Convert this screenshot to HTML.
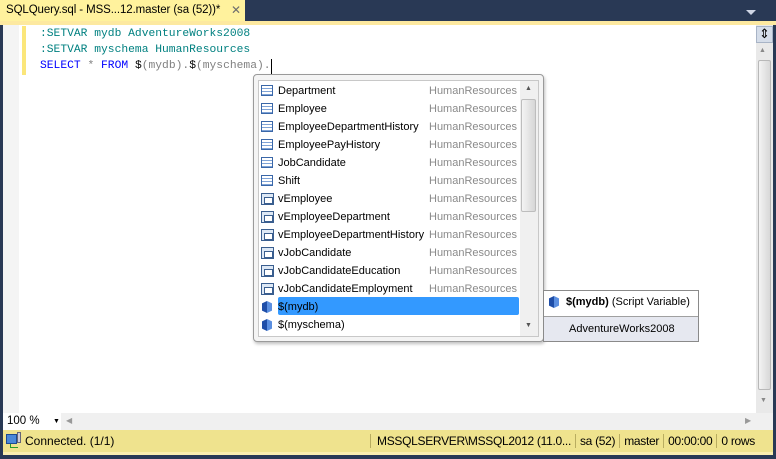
<!DOCTYPE html>
<html><head><style>
*{margin:0;padding:0;box-sizing:border-box}
body{width:776px;height:459px;background:#293955;position:relative;overflow:hidden;font-family:"Liberation Sans",sans-serif;font-size:11px}
.a{position:absolute}
.code{font-family:"Liberation Mono",monospace;font-size:11.3px;line-height:16px;white-space:pre}
.row{position:absolute;left:0;height:18px;width:270px;line-height:18px;color:#000}
.row .n{position:absolute;left:25px}
.row .s{position:absolute;left:176px;color:#8a8a8a}
.ic{position:absolute;left:8px;top:3px;width:12px;height:11px;border:1px solid #3a67a8;background:repeating-linear-gradient(#fff 0 2px,#7fa3d6 2px 3px);}
.iv{position:absolute;left:8px;top:3px;width:13px;height:12px;border:1px solid #3a5e8f;background:#dde8f5}
.iv:after{content:"";position:absolute;left:2px;top:3px;width:7px;height:5px;border:1px solid #3a5e8f;background:#fff}
.ib{position:absolute;left:9px;top:3px;width:10px;height:12px;background:linear-gradient(90deg,#1f4ea8 50%,#5b8fe0 50%);clip-path:polygon(50% 0,100% 20%,100% 80%,50% 100%,0 80%,0 20%)}
</style></head><body>
<div class="a" style="left:0;top:0;width:245px;height:22px;background:#fff29d;"></div>
<div class="a" style="left:6px;top:4px;font-size:11.5px;color:#000;letter-spacing:-0.1px">SQLQuery.sql - MSS...12.master (sa (52))*</div>
<div class="a" style="left:231px;top:3px;font-size:12px;color:#6e6e6e">✕</div>
<div class="a" style="left:746px;top:10px;width:0;height:0;border:5px solid transparent;border-top:5px solid #cfd6e5"></div>
<div class="a" style="left:0;top:21px;width:776px;height:4px;background:#fde9a0"></div>
<div class="a" style="left:3px;top:25px;width:753px;height:388px;background:#fff"></div>
<div class="a" style="left:3px;top:25px;width:16px;height:388px;background:#f4f4f4"></div>
<div class="a" style="left:22px;top:26px;width:4px;height:49px;background:#fbe67a"></div>
<div class="a code" style="left:40px;top:26px;color:#008080">:SETVAR mydb AdventureWorks2008
:SETVAR myschema HumanResources
<span style="color:#0000ff">SELECT</span> <span style="color:#808080">*</span> <span style="color:#0000ff">FROM</span> <span style="color:#000">$</span><span style="color:#808080">(</span><span style="color:#808080">mydb).</span><span style="color:#000">$</span><span style="color:#808080">(myschema).</span></div>
<div class="a" style="left:271px;top:59px;width:1px;height:15px;background:#000"></div>
<!-- vertical scrollbar -->
<div class="a" style="left:756px;top:25px;width:17px;height:388px;background:#e9e9e9"></div>
<div class="a" style="left:756px;top:26px;width:17px;height:17px;background:#d5dde9;border:1px solid #a8b4c6;font-size:13px;text-align:center;line-height:14px">⇕</div>
<div class="a" style="left:759px;top:47px;font-size:7px;color:#888">▲</div>
<div class="a" style="left:758px;top:60px;width:13px;height:330px;background:linear-gradient(90deg,#f3f3f3,#d8d8d8);border:1px solid #b8b8b8;border-radius:2px"></div>
<div class="a" style="left:760px;top:397px;font-size:7px;color:#888">▼</div>
<!-- horizontal bar -->
<div class="a" style="left:3px;top:413px;width:770px;height:17px;background:#f0f0f0"></div>
<div class="a" style="left:3px;top:413px;width:58px;height:17px;background:#fff;font-size:11.5px;line-height:17px;padding-left:4px">100 %<span style="position:absolute;left:50px;font-size:7px">▼</span></div>
<div class="a" style="left:66px;top:416px;font-size:8px;color:#999">◀</div>
<div class="a" style="left:745px;top:416px;font-size:8px;color:#999">▶</div>
<!-- status bar -->
<div class="a" style="left:3px;top:430px;width:770px;height:22px;background:#efe38e"></div>
<div class="a" style="left:3px;top:452px;width:770px;height:3px;background:#fbeeb0"></div>
<div class="a" style="left:6px;top:434px;width:11px;height:10px;background:#4a88d8;border:1px solid #1d4b92"></div>
<div class="a" style="left:17px;top:432px;width:4px;height:11px;background:#ccd;border:1px solid #667"></div>
<div class="a" style="left:10px;top:444px;width:8px;height:4px;border-left:1px solid #2a9a2a;border-bottom:1px solid #2a9a2a"></div>
<div class="a" style="left:25px;top:434px;font-size:12px">Connected. (1/1)</div>
<div class="a" style="left:370px;top:434px;font-size:12px;white-space:pre;letter-spacing:-0.3px"><span style="border-left:1px solid #b9ad60;padding:0 4px 0 6px">MSSQLSERVER\MSSQL2012 (11.0...</span><span style="border-left:1px solid #b9ad60;padding:0 4px">sa (52)</span><span style="border-left:1px solid #b9ad60;padding:0 4px">master</span><span style="border-left:1px solid #b9ad60;padding:0 4px">00:00:00</span><span style="border-left:1px solid #b9ad60;padding:0 4px">0 rows</span></div>
<!-- popup -->
<div class="a" style="left:253px;top:74px;width:291px;height:268px;background:#f4f4f4;border:1px solid #9a9a9a;border-radius:4px;box-shadow:1px 2px 3px rgba(0,0,0,.25)"></div>
<div class="a" style="left:258px;top:80px;width:281px;height:257px;background:#fff;border:1px solid #c8c8c8"></div>
<div class="a" style="left:520px;top:81px;width:18px;height:255px;background:#f0f0f0"></div>
<div class="a" style="left:525px;top:85px;font-size:7px;color:#555">▲</div>
<div class="a" style="left:521px;top:99px;width:15px;height:113px;background:linear-gradient(90deg,#f4f4f4,#d6d6d6);border:1px solid #bdbdbd;border-radius:2px"></div>
<div class="a" style="left:525px;top:322px;font-size:7px;color:#555">▼</div>
<div class="a" style="left:278px;top:297px;width:241px;height:18px;background:#3399ff;border-radius:2px"></div>
<div class="a" style="left:253px;top:82px;width:270px;height:254px;font-size:11px">
<div class="row" style="top:0"><i class="ic"></i><span class="n">Department</span><span class="s">HumanResources</span></div>
<div class="row" style="top:18px"><i class="ic"></i><span class="n">Employee</span><span class="s">HumanResources</span></div>
<div class="row" style="top:36px"><i class="ic"></i><span class="n">EmployeeDepartmentHistory</span><span class="s">HumanResources</span></div>
<div class="row" style="top:54px"><i class="ic"></i><span class="n">EmployeePayHistory</span><span class="s">HumanResources</span></div>
<div class="row" style="top:72px"><i class="ic"></i><span class="n">JobCandidate</span><span class="s">HumanResources</span></div>
<div class="row" style="top:90px"><i class="ic"></i><span class="n">Shift</span><span class="s">HumanResources</span></div>
<div class="row" style="top:108px"><i class="iv"></i><span class="n">vEmployee</span><span class="s">HumanResources</span></div>
<div class="row" style="top:126px"><i class="iv"></i><span class="n">vEmployeeDepartment</span><span class="s">HumanResources</span></div>
<div class="row" style="top:144px"><i class="iv"></i><span class="n">vEmployeeDepartmentHistory</span><span class="s">HumanResources</span></div>
<div class="row" style="top:162px"><i class="iv"></i><span class="n">vJobCandidate</span><span class="s">HumanResources</span></div>
<div class="row" style="top:180px"><i class="iv"></i><span class="n">vJobCandidateEducation</span><span class="s">HumanResources</span></div>
<div class="row" style="top:198px"><i class="iv"></i><span class="n">vJobCandidateEmployment</span><span class="s">HumanResources</span></div>
<div class="row" style="top:216px"><i class="ib"></i><span class="n">$(mydb)</span></div>
<div class="row" style="top:234px"><i class="ib"></i><span class="n">$(myschema)</span></div>
</div>
<!-- tooltip -->
<div class="a" style="left:543px;top:290px;width:156px;height:52px;background:#fff;border:1px solid #8a8a8a"></div>
<div class="a" style="left:544px;top:316px;width:154px;height:25px;background:#e6e8f0;border-top:1px solid #a0a0a0"></div>
<div class="a" style="left:540px;top:293px;width:30px;height:18px"><i class="ib"></i></div>
<div class="a" style="left:566px;top:296px;font-size:11px"><b>$(mydb)</b> (Script Variable)</div>
<div class="a" style="left:569px;top:323px;font-size:11px">AdventureWorks2008</div>
</body></html>
